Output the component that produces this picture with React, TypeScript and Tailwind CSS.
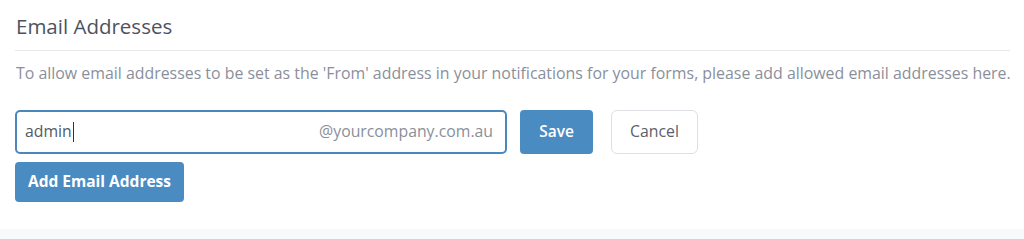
export default function App() {
  return (
    <div className="w-[1024px] h-[239px] bg-[#f8f9fa] font-['Open_Sans',sans-serif]">
      <div className="bg-white h-[229px] pl-[15px] pr-[14px] pt-[12px]">
        <h2 className="text-[20.5px] leading-[28px] text-[#4d5262] pl-px">Email Addresses</h2>
        <div className="mt-[10px] border-t border-[#e6e8ec]" />
        <p className="mt-[12px] text-[15.9px] leading-[20px] text-[#8a8f9b] pl-px whitespace-nowrap">
          To allow email addresses to be set as the 'From' address in your notifications for your forms, please add allowed email addresses here.
        </p>
        <div className="mt-[27px] flex items-center">
          <div className="w-[492px] h-[44px] flex items-center rounded-[5px] border-2 border-[#4a87bd] pl-[8px] pr-[12px]">
            <span className="text-[15.8px] text-[#555a66] flex-1 flex items-center">
              admin<span className="inline-block w-px h-[20px] bg-[#333] ml-px" />
            </span>
            <span className="text-[15.8px] text-[#8a8f99]">@yourcompany.com.au</span>
          </div>
          <button className="ml-[13px] w-[73px] h-[44px] rounded-[4px] bg-[#4a8bc2] text-white text-[15.5px] font-semibold">
            Save
          </button>
          <button className="ml-[18px] w-[87px] h-[44px] rounded-[6px] border border-[#dcdfe4] bg-white text-[#5a5f6b] text-[15.8px]">
            Cancel
          </button>
        </div>
        <button className="mt-[8px] w-[169px] h-[40px] rounded-[4px] bg-[#4a8bc2] text-white text-[15.5px] font-bold">
          Add Email Address
        </button>
      </div>
    </div>
  );
}
